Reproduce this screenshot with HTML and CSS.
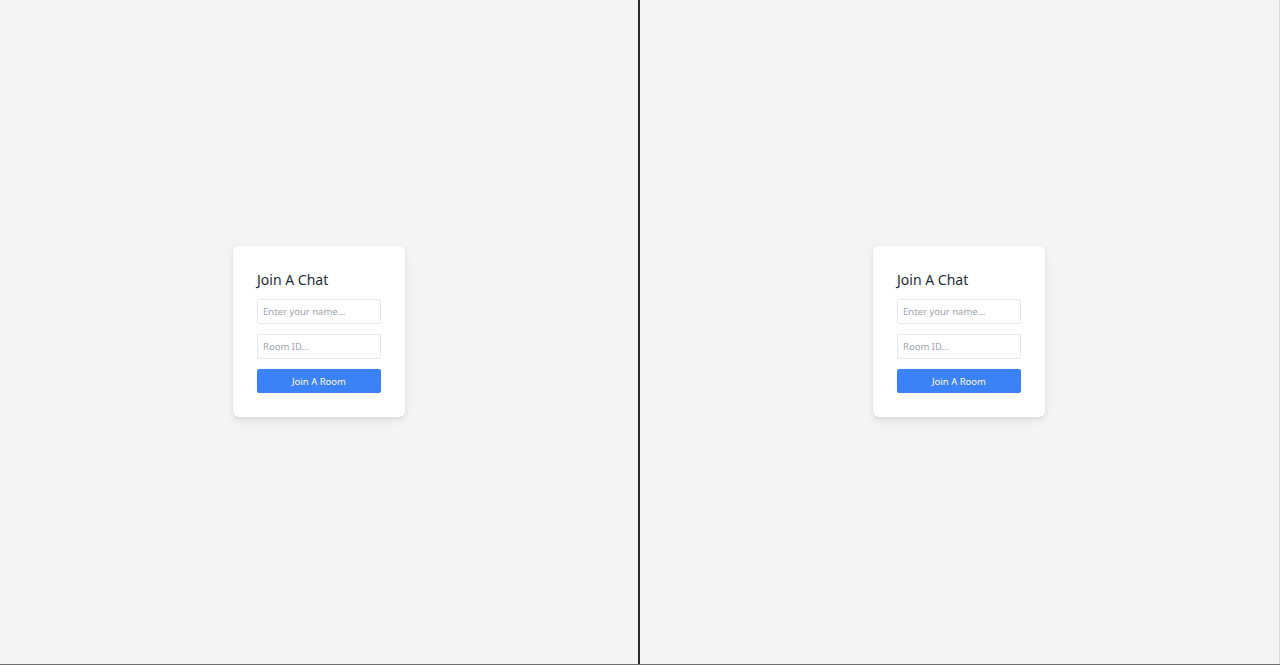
FILE: index.html
```html
<!DOCTYPE html>
<html lang="en">
<head>
<meta charset="utf-8">
<title>Join A Chat</title>
<link rel="stylesheet" href="styles.css">
</head>
<body>
<div class="screen">
  <div class="pane pane-left">
    <form class="card">
      <h3 class="title">Join A Chat</h3>
      <input class="field" type="text" placeholder="Enter your name...">
      <input class="field" type="text" placeholder="Room ID...">
      <button class="btn" type="button">Join A Room</button>
    </form>
  </div>
  <div class="divider"></div>
  <div class="pane pane-right">
    <form class="card">
      <h3 class="title">Join A Chat</h3>
      <input class="field" type="text" placeholder="Enter your name...">
      <input class="field" type="text" placeholder="Room ID...">
      <button class="btn" type="button">Join A Room</button>
    </form>
  </div>
</div>
<div class="bottom-line"></div>
</body>
</html>
```
FILE: styles.css
```css
* { box-sizing: border-box; }
html, body { margin: 0; padding: 0; height: 665px; overflow: hidden; }
body {
  font-family: "Noto Sans", "Open Sans", Arial, sans-serif;
  background: #f3f4f6;
  display: flex;
  flex-direction: column;
}
.screen {
  display: flex;
  height: 664px;
}
.pane {
  display: flex;
  align-items: center;
  justify-content: center;
  background: #f3f4f6;
  padding-bottom: 1px;
}
.pane-left { width: 638px; }
.pane-right { flex: 1; padding-right: 2px; box-shadow: inset -1px 0 0 #d9dadc; }
.divider {
  width: 2px;
  background: #2b2b2b;
}
.bottom-line {
  height: 1px;
  background: #6e6e6e;
}
.card {
  width: 172px;
  height: 171px;
  background: #ffffff;
  border-radius: 6px;
  box-shadow: 0 4px 8px rgba(0, 0, 0, 0.08), 0 1px 3px rgba(0, 0, 0, 0.06);
  padding: 24px;
  display: flex;
  flex-direction: column;
  gap: 10px;
  margin: 0;
}
.title {
  margin: 0 0 -1px 0;
  font-size: 14px;
  line-height: 20px;
  font-weight: 400;
  color: #1f2937;
}
.field {
  height: 25px;
  width: 124px;
  border: 1px solid #e5e7eb;
  border-radius: 2px;
  padding: 0 5px;
  font-family: inherit;
  font-size: 9.5px;
  color: #374151;
  background: #fff;
  outline: none;
}
.field::placeholder { color: #9ca3af; }
.btn {
  height: 24px;
  width: 124px;
  border: none;
  border-radius: 2px;
  background: #3b82f6;
  color: #ffffff;
  font-family: inherit;
  font-size: 9.5px;
  padding: 0;
}
```
